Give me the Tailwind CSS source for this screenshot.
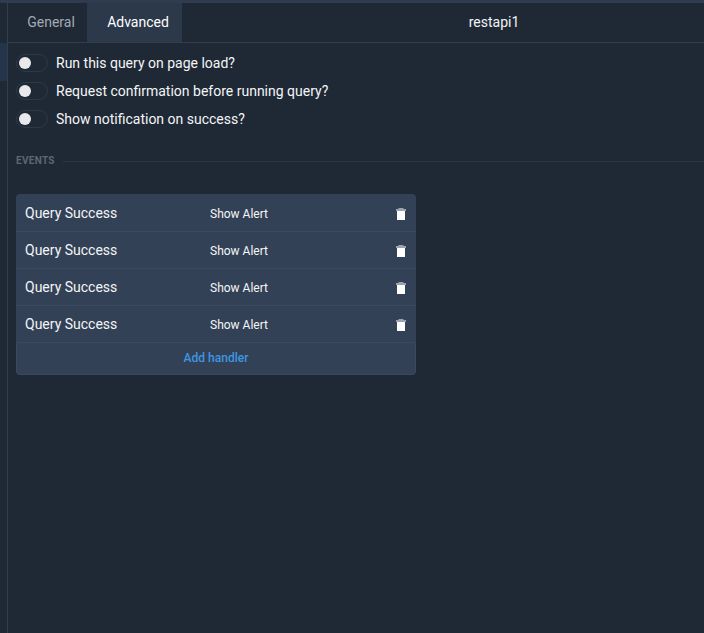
<!DOCTYPE html>
<html lang="en">
<head>
  <meta charset="UTF-8" />
  <title>restapi1</title>
  <script src="https://cdn.jsdelivr.net/npm/@tailwindcss/browser@4"></script>
</head>
<body class="bg-[#1f2936] font-['Roboto',sans-serif] overflow-hidden">
  <div class="w-[704px] h-[633px] flex flex-col">
    <!-- top strip -->
    <div class="h-[3px] bg-[#2f3c4f] shrink-0"></div>

    <div class="flex flex-1 min-h-0">
      <!-- left rail -->
      <aside class="w-[8px] shrink-0 border-r border-[#323e4e] pt-[40px]">
        <div class="h-[38px] bg-[#24344a]"></div>
      </aside>

      <main class="flex-1 min-w-0">
        <!-- header -->
        <header class="h-[40px] flex border-b border-[#323e4e]">
          <div class="w-[79px] pl-[7px] flex items-center justify-center text-[14px] text-[#a3aab2]">General</div>
          <div class="w-[95px] h-[39px] pl-[7px] flex items-center justify-center text-[14px] font-[450] text-white bg-[#2b394b]">Advanced</div>
          <div class="flex-1 pl-[102px] flex items-center justify-center text-[14px] font-[450] text-[#f1f3f5]">restapi1</div>
        </header>

        <!-- options -->
        <section class="pl-[8px] pt-[11px] flex flex-col gap-[10px]">
          <label class="flex items-center gap-[8px] h-[18px]">
            <span class="w-[32px] h-[18px] rounded-full border border-[#2d3848] flex items-center pl-[2px]"><span class="w-[12px] h-[12px] rounded-full bg-[#e8e9ea]"></span></span>
            <span class="text-[14px] text-[#f4f5f7]">Run this query on page load?</span>
          </label>
          <label class="flex items-center gap-[8px] h-[18px]">
            <span class="w-[32px] h-[18px] rounded-full border border-[#2d3848] flex items-center pl-[2px]"><span class="w-[12px] h-[12px] rounded-full bg-[#e8e9ea]"></span></span>
            <span class="text-[14px] text-[#f4f5f7]">Request confirmation before running query?</span>
          </label>
          <label class="flex items-center gap-[8px] h-[18px]">
            <span class="w-[32px] h-[18px] rounded-full border border-[#2d3848] flex items-center pl-[2px]"><span class="w-[12px] h-[12px] rounded-full bg-[#e8e9ea]"></span></span>
            <span class="text-[14px] text-[#f4f5f7]">Show notification on success?</span>
          </label>
        </section>

        <!-- events divider -->
        <div class="pl-[8px] mt-[25px] flex items-center gap-[8px] h-[14px]">
          <span class="text-[10px] font-bold tracking-[0.3px] text-[#5d6672]">EVENTS</span>
          <span class="flex-1 h-px mt-[2px] bg-[#2b3645]"></span>
        </div>

        <!-- handlers -->
        <div class="ml-[8px] mt-[27px] w-[400px] h-[181px] rounded-[4px] bg-[#334156] flex flex-col overflow-hidden">
          <div class="h-[38px] flex items-center border-b border-[#3b495d] pt-[1px] pl-[9px] pr-[9px]">
            <span class="w-[185px] text-[14px] text-[#f4f5f7]">Query Success</span>
            <span class="flex-1 mt-[2px] text-[12px] text-[#f4f5f7]">Show Alert</span>
            <svg class="mr-[1px] mt-[2px]" width="10" height="12" viewBox="0 0 10 12"><path fill="#9aa3af" d="M3 0h4l1 1h2v2H0V1h2z"/><path fill="#ffffff" d="M1 3h8v9H1z"/></svg>
          </div>
          <div class="h-[37px] flex items-center border-b border-[#3b495d] pl-[9px] pr-[9px]">
            <span class="w-[185px] text-[14px] text-[#f4f5f7]">Query Success</span>
            <span class="flex-1 mt-[2px] text-[12px] text-[#f4f5f7]">Show Alert</span>
            <svg class="mr-[1px] mt-[2px]" width="10" height="12" viewBox="0 0 10 12"><path fill="#9aa3af" d="M3 0h4l1 1h2v2H0V1h2z"/><path fill="#ffffff" d="M1 3h8v9H1z"/></svg>
          </div>
          <div class="h-[37px] flex items-center border-b border-[#3b495d] pl-[9px] pr-[9px]">
            <span class="w-[185px] text-[14px] text-[#f4f5f7]">Query Success</span>
            <span class="flex-1 mt-[2px] text-[12px] text-[#f4f5f7]">Show Alert</span>
            <svg class="mr-[1px] mt-[2px]" width="10" height="12" viewBox="0 0 10 12"><path fill="#9aa3af" d="M3 0h4l1 1h2v2H0V1h2z"/><path fill="#ffffff" d="M1 3h8v9H1z"/></svg>
          </div>
          <div class="h-[36px] flex items-center pl-[9px] pr-[9px]">
            <span class="w-[185px] text-[14px] text-[#f4f5f7]">Query Success</span>
            <span class="flex-1 mt-[2px] text-[12px] text-[#f4f5f7]">Show Alert</span>
            <svg class="mr-[1px] mt-[2px]" width="10" height="12" viewBox="0 0 10 12"><path fill="#9aa3af" d="M3 0h4l1 1h2v2H0V1h2z"/><path fill="#ffffff" d="M1 3h8v9H1z"/></svg>
          </div>
          <div class="flex-1 pb-[2px] flex items-center justify-center border border-[#3b495d] rounded-b-[4px] text-[12px] font-medium text-[#3f96e0]">Add handler</div>
        </div>
      </main>
    </div>
  </div>
</body>
</html>
